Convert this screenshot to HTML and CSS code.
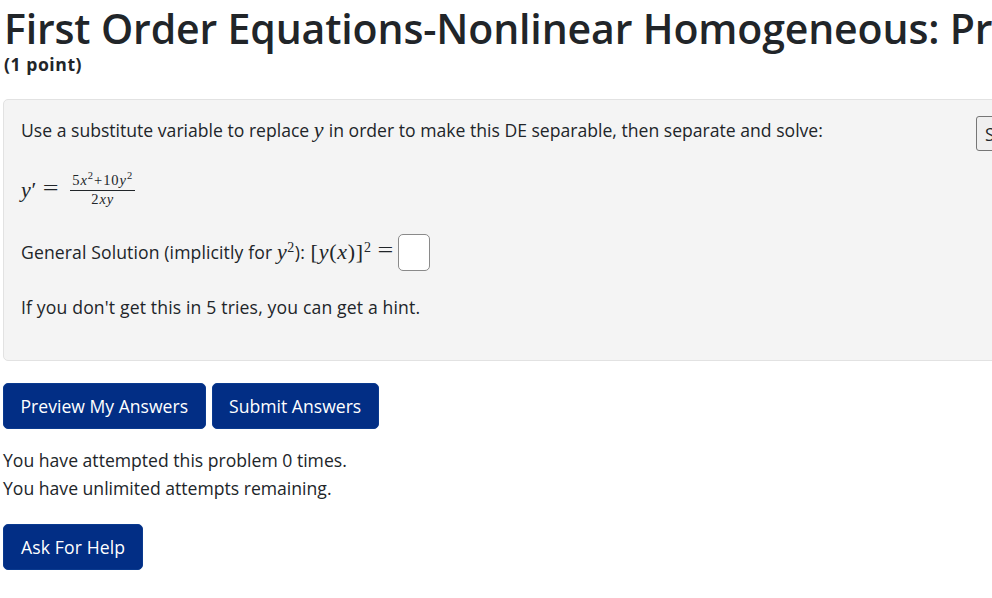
FILE: index.html
```html
<!DOCTYPE html>
<html lang="en">
<head>
<meta charset="utf-8">
<title>First Order Equations</title>
<link rel="stylesheet" href="styles.css">
</head>
<body>
<main class="page">
  <h1 class="title">First Order Equations-Nonlinear Homogeneous: Problem 1</h1>
  <div class="points">(1 point)</div>
  <section class="problem">
    <div class="problem-inner">
      <div class="problem-body">
        <p class="line first">Use a substitute variable to replace <i class="m">y</i> in order to make this DE separable, then separate and solve:</p>
        <p class="line eq">
          <span class="m-wrap"><i class="m">y</i><span class="m">′</span><span class="m eq-sign">=</span></span>
          <span class="frac"><span class="num">5<i>x</i><sup>2</sup>+10<i>y</i><sup>2</sup></span><span class="den">2<i>xy</i></span></span>
        </p>
        <p class="line sol">General Solution (implicitly for <i class="m">y</i><sup class="m sup">2</sup>): <span class="m group">[<i>y</i>(<i>x</i>)]</span><sup class="m sup">2</sup><span class="m eq-sign">=</span><input class="answer" type="text" aria-label="answer"></p>
        <p class="line hint">If you don't get this in 5 tries, you can get a hint.</p>
      </div>
      <button class="side-btn" type="button">Show</button>
    </div>
  </section>
  <div class="actions">
    <button class="btn" type="button">Preview My Answers</button>
    <button class="btn" type="button">Submit Answers</button>
  </div>
  <p class="status">You have attempted this problem 0 times.<br>You have unlimited attempts remaining.</p>
  <button class="btn btn-help" type="button">Ask For Help</button>
</main>
</body>
</html>
```
FILE: styles.css
```css
html, body {
  margin: 0;
  height: 100%;
  overflow: hidden;
  background: #fff;
}
body {
  font-family: "Open Sans", "Noto Sans", sans-serif;
  font-size: 17.6px;
  color: #212529;
}
.page {
  width: 1300px;
  padding: 0 3px;
  box-sizing: border-box;
}
.title {
  margin: 0;
  padding: 5px 0 0 1px;
  font-size: 41px;
  line-height: 46px;
  font-weight: 600;
  white-space: nowrap;
  letter-spacing: -0.14px;
}
.points {
  font-size: 17.6px;
  font-weight: 700;
  line-height: 24px;
  margin-top: 1px;
  padding-left: 1px;
  letter-spacing: 0.55px;
}
.problem {
  margin-top: 23px;
  height: 262px;
  box-sizing: border-box;
  background: #f4f4f4;
  border: 1px solid #e2e2e2;
  border-radius: 5px;
}
.problem-inner {
  display: flex;
  padding: 16px 17px 0;
}
.problem-body {
  width: 955px;
  flex: none;
}
.line {
  margin: 0;
  white-space: nowrap;
  font-size: 17.6px;
}
.first { line-height: 28px; }
.eq {
  display: flex;
  align-items: center;
  gap: 8px;
  margin-top: 29px;
  height: 34px;
}
.sol {
  margin-top: 26px;
  height: 38px;
  line-height: 38px;
  letter-spacing: 0.11px;
}
.hint {
  margin-top: 22px;
  line-height: 28px;
  letter-spacing: 0.15px;
}
.m, .frac {
  font-family: "Liberation Serif", "DejaVu Serif", serif;
}
.m { font-size: 22px; letter-spacing: 0.6px; }
.m-wrap { white-space: nowrap; }
.group { margin-left: 1px; letter-spacing: 0.75px; }
.eq-sign {
  display: inline-block;
  margin: 0 3px 0 6px;
  font-size: 28px;
  line-height: 20px;
  transform: scaleY(0.75);
}
.sol .eq-sign { margin-right: 4px; }
.sup {
  font-size: 14px;
  line-height: 0;
}
.frac {
  display: inline-flex;
  flex-direction: column;
  align-items: center;
  font-size: 14.5px;
  line-height: 17px;
  letter-spacing: 0.95px;
}
.frac sup {
  font-size: 10.5px;
  line-height: 0;
}
.num {
  padding: 0 2px 1px;
  border-bottom: 1px solid #212529;
}
.answer {
  width: 32px;
  height: 37px;
  box-sizing: border-box;
  padding: 0;
  margin: -4px 0 0;
  vertical-align: middle;
  background: #fff;
  border: 1px solid #8a8a8a;
  border-radius: 5px;
}
.side-btn {
  flex: none;
  height: 35px;
  width: 70px;
  padding: 0 8px;
  text-align: left;
  font: 400 17.6px "Open Sans", sans-serif;
  color: #212529;
  background: #efefef;
  border: 1px solid #767676;
  border-radius: 3px;
}
.actions {
  display: flex;
  gap: 6px;
  margin-top: 22px;
}
.btn {
  display: block;
  height: 46px;
  padding: 0 16.5px;
  font: 400 17.6px "Open Sans", sans-serif;
  color: #fff;
  background: #022e85;
  border: 1px solid #0a3a8f;
  border-radius: 5px;
}
.btn-help {
  padding: 0 17px;
  letter-spacing: 0.12px;
}
.status {
  margin: 17px 0 22px;
  line-height: 28px;
  font-size: 17.6px;
}
```
